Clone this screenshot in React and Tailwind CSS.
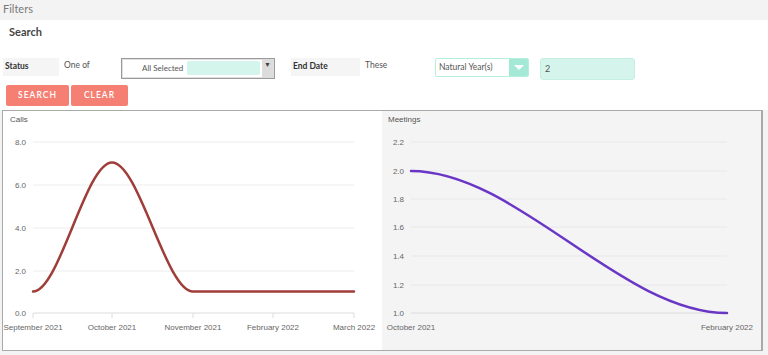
import React from "react";

const callsTicks = [
  { label: "8.0", y: 142 },
  { label: "6.0", y: 185 },
  { label: "4.0", y: 228 },
  { label: "2.0", y: 271 },
  { label: "0.0", y: 313 },
];

const callsMonths = [
  { label: "September 2021", x: 33 },
  { label: "October 2021", x: 112 },
  { label: "November 2021", x: 193 },
  { label: "February 2022", x: 273 },
  { label: "March 2022", x: 354 },
];

const meetingTicks = [
  { label: "2.2", y: 142 },
  { label: "2.0", y: 171 },
  { label: "1.8", y: 199 },
  { label: "1.6", y: 227 },
  { label: "1.4", y: 256 },
  { label: "1.2", y: 285 },
  { label: "1.0", y: 313 },
];

// smooth path with flat tangents at each point
function smoothPath(points) {
  let d = `M${points[0][0]},${points[0][1]}`;
  for (let i = 1; i < points.length; i++) {
    const [x0, y0] = points[i - 1];
    const [x1, y1] = points[i];
    const dx = (x1 - x0) / 3;
    d += ` C${x0 + dx},${y0} ${x1 - dx},${y1} ${x1},${y1}`;
  }
  return d;
}

function Label({ children, className = "" }) {
  return (
    <div
      className={`h-[18px] bg-[#f5f5f5] flex items-center pl-[2px] text-[8.5px] font-bold text-[#333] shrink-0 ${className}`}
    >
      {children}
    </div>
  );
}

function CallsChart() {
  const pts = [
    [33, 291.5],
    [112, 162.5],
    [193, 291.5],
    [273, 291.5],
    [354, 291.5],
  ];
  return (
    <svg viewBox="3 111 379 239" className="w-[379px] h-[239px] block bg-white">
      <text x="10" y="122" fontSize="8" fill="#555" fontFamily="Liberation Sans, Arial, sans-serif">
        Calls
      </text>
      {callsTicks.map((t) => (
        <g key={t.label}>
          <line x1="33" x2="354" y1={t.y} y2={t.y} stroke={t.y === 313 ? "#dcdcdc" : "#ececec"} strokeWidth="1" />
          <text x="26" y={t.y + 3} textAnchor="end" fontSize="8" fill="#666" fontFamily="Liberation Sans, Arial, sans-serif">
            {t.label}
          </text>
        </g>
      ))}
      {callsMonths.map((m) => (
        <g key={m.label}>
          <line x1={m.x} x2={m.x} y1="313" y2="318" stroke="#dcdcdc" strokeWidth="1" />
          <text x={m.x} y="330" textAnchor="middle" fontSize="8" fill="#666" fontFamily="Liberation Sans, Arial, sans-serif">
            {m.label}
          </text>
        </g>
      ))}
      <path d={smoothPath(pts)} fill="none" stroke="#9f3d38" strokeWidth="2.5" strokeLinecap="round" />
    </svg>
  );
}

function MeetingsChart() {
  const pts = [
    [411, 171],
    [727, 313],
  ];
  return (
    <svg viewBox="382 111 379 239" className="w-[379px] h-[239px] block bg-[#f4f4f4]">
      <text x="388" y="122" fontSize="8" fill="#555" fontFamily="Liberation Sans, Arial, sans-serif">
        Meetings
      </text>
      {meetingTicks.map((t) => (
        <g key={t.label}>
          <line x1="411" x2="727" y1={t.y} y2={t.y} stroke={t.y === 313 ? "#dcdcdc" : "#e8e8e8"} strokeWidth="1" />
          <text x="404" y={t.y + 3} textAnchor="end" fontSize="8" fill="#666" fontFamily="Liberation Sans, Arial, sans-serif">
            {t.label}
          </text>
        </g>
      ))}
      <text x="411" y="330" textAnchor="middle" fontSize="8" fill="#666" fontFamily="Liberation Sans, Arial, sans-serif">
        October 2021
      </text>
      <text x="727" y="330" textAnchor="middle" fontSize="8" fill="#666" fontFamily="Liberation Sans, Arial, sans-serif">
        February 2022
      </text>
      <path d={smoothPath(pts)} fill="none" stroke="#6936c6" strokeWidth="2.5" strokeLinecap="round" />
    </svg>
  );
}

export default function App() {
  return (
    <div className="w-[768px] h-[355px] overflow-hidden bg-[#f3f3f3] font-['Lato','Open_Sans',sans-serif]">
      <div className="h-[20px] pl-[3px] pt-px text-[11px] text-[#7a7a7a]">Filters</div>

      <div className="bg-white h-[90px]">
        <div className="pl-[9px] pt-[4px] text-[11px] font-bold text-[#444]">Search</div>

        <div className="flex items-start mt-[17px] h-[21px]">
          <Label className="ml-[3px] w-[56px]">Status</Label>
          <div className="ml-[5px] w-[57px] shrink-0 text-[8.5px] text-[#555] leading-[12px] pt-[1px]">One of</div>
          <div className="w-[154px] h-[21px] shrink-0 border border-[#9a9a9a] shadow-[inset_0_0_0_1px_#e0e0e0] flex items-center">
            <span className="ml-[20px] w-[45px] shrink-0 whitespace-nowrap text-[8px] text-[#555]">All Selected</span>
            <div className="w-[73px] h-[14px] shrink-0 bg-[#d3f5eb] rounded-[2px]" />
            <div className="ml-[2px] w-[11px] h-[19px] shrink-0 bg-[#dcdcdc] flex justify-center pt-[2px] text-[7px] text-[#444] leading-none">
              ▼
            </div>
          </div>
          <Label className="ml-[16px] w-[69px]">End Date</Label>
          <div className="ml-[5px] w-[70px] shrink-0 text-[8.5px] text-[#555] leading-[12px] pt-[1px]">These</div>
          <div className="w-[94px] h-[19px] shrink-0 border border-[#b4eedd] rounded-[2px] flex items-center overflow-hidden">
            <span className="flex-1 pl-[3px] whitespace-nowrap text-[8.5px] text-[#555]">Natural Year(s)</span>
            <div className="w-[19px] h-full bg-[#a4e9d5] flex items-center justify-center">
              <div className="w-0 h-0 border-l-[5px] border-r-[5px] border-t-[5px] border-l-transparent border-r-transparent border-t-white" />
            </div>
          </div>
          <div className="ml-[11px] w-[95px] h-[22px] shrink-0 bg-[#d5f5ec] border border-[#c4f0e2] rounded-[3px] flex items-center pl-[4px] text-[9px] text-[#555]">
            2
          </div>
        </div>

        <div className="flex gap-[2px] ml-[6px] mt-[6px]">
          <button className="w-[63px] h-[21px] bg-[#f47f72] rounded-[2px] text-white text-[8.5px] font-semibold tracking-[1px]">
            SEARCH
          </button>
          <button className="w-[57px] h-[21px] bg-[#f47f72] rounded-[2px] text-white text-[8.5px] font-semibold tracking-[1px]">
            CLEAR
          </button>
        </div>
      </div>

      <div className="ml-[2px] w-[761px] border border-[#a9a9a9] border-r-2 flex bg-white">
        <CallsChart />
        <MeetingsChart />
      </div>
    </div>
  );
}
